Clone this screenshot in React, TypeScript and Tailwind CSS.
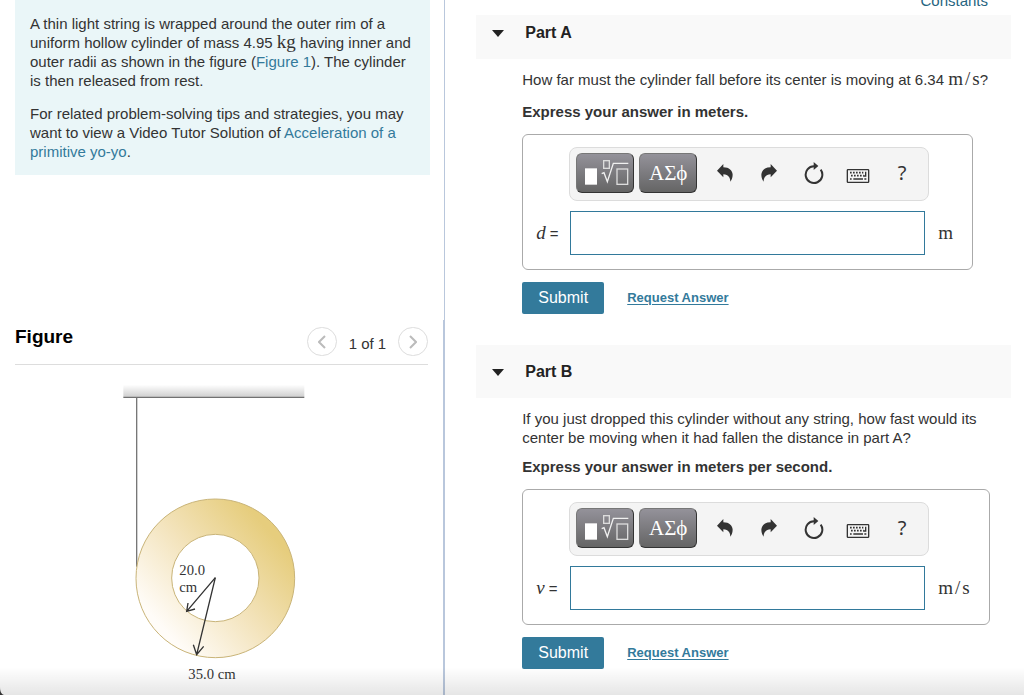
import type { ReactNode } from 'react'

const MATH = "font-['Liberation_Serif',serif]"

function Unit({ top, bottom }: { top: string; bottom?: string }) {
  return (
    <span className={`${MATH} text-[19px] leading-4`}>
      {top}
      {bottom && (
        <>
          <span className="px-0.5">/</span>
          {bottom}
        </>
      )}
    </span>
  )
}

function TemplateIcon() {
  return (
    <svg viewBox="3 3 168 114" className="w-full h-full" fill="none" aria-hidden="true">
      <rect x="27" y="46" width="36" height="49" fill="#fff" />
      <rect x="83" y="23" width="17" height="23" stroke="#dcdcdc" strokeWidth="4" />
      <path d="M77 62l7-3 10 27 18-55h45" stroke="#f0f0f0" strokeWidth="4" />
      <rect x="123" y="48" width="32" height="46" stroke="#dcdcdc" strokeWidth="4" />
    </svg>
  )
}

const ICONS: { label: string; viewBox: string; art: ReactNode }[] = [
  {
    label: 'Undo',
    viewBox: '39 33 72 72',
    art: <path d="M51 62L70 42V52C88 52 97 62 98 74C98 84 94 91 91 95C91 84 86 74 70 73V82Z" />,
  },
  {
    label: 'Redo',
    viewBox: '172 33 72 72',
    art: <path d="M232 62L213 42V52C195 52 186 62 185 74C185 84 189 91 192 95C192 84 197 74 213 73V82Z" />,
  },
  {
    label: 'Reset',
    viewBox: '305 33 72 72',
    art: (
      <>
        <path d="M341 49A25 25 0 1 0 361 59" fill="none" stroke="#333" strokeWidth="6" />
        <path d="M340 36L354 48L340 60Z" />
      </>
    ),
  },
  {
    label: 'Keyboard shortcuts',
    viewBox: '438 33 72 72',
    art: (
      <g fill="none" stroke="#333">
        <rect x="442" y="59" width="64" height="38" rx="2" strokeWidth="4" />
        <path d="M450 68h40M453 77h38" strokeWidth="5" strokeDasharray="5 4" />
        <path d="M450 87h5M460 87h29M493 87h6" strokeWidth="5" />
        <path d="M497 65v13h-7" strokeWidth="4" />
      </g>
    ),
  },
]

const DARK_BUTTON =
  'w-[58px] h-10 rounded-md border border-[#777] border-r-[#333] border-b-[#333] bg-gradient-to-b from-[#94929a] to-[#656565] text-white'

function Toolbar() {
  return (
    <div className="flex items-center w-[360px] h-[54px] pl-1.5 pr-1 pb-0.5 rounded-lg border border-[#dcdcdc] bg-[#f4f4f4] text-[#333]">
      <button type="button" aria-label="Templates" className={`${DARK_BUTTON} mr-[5px]`}>
        <TemplateIcon />
      </button>
      <button type="button" aria-label="Greek symbols" className={`${DARK_BUTTON} ${MATH} mr-1.5 text-[21px] leading-none`}>
        ΑΣϕ
      </button>
      <div className="grid grid-cols-5 items-center flex-1">
        {ICONS.map((icon) => (
          <button key={icon.label} type="button" aria-label={icon.label} className="flex justify-center">
            <svg viewBox={icon.viewBox} className="size-6" fill="#333" aria-hidden="true">
              {icon.art}
            </svg>
          </button>
        ))}
        <button type="button" aria-label="Help" className="font-['Noto_Sans',sans-serif] text-xl leading-6">
          ?
        </button>
      </div>
    </div>
  )
}

type AnswerProps = { id: string; symbol: string; unit: ReactNode }

function AnswerBox({ id, symbol, unit }: AnswerProps) {
  return (
    <form className="w-fit" onSubmit={(e) => e.preventDefault()}>
      <div className="grid grid-cols-[46px_auto] w-fit gap-y-2.5 pt-3 pr-[19px] pb-3.5 rounded-md border border-[#aaa]">
        <div className="col-start-2">
          <Toolbar />
        </div>
        <label htmlFor={id} className="self-center pl-[13px] whitespace-nowrap text-[15px]">
          <span className={`${MATH} italic text-[19px] leading-4`}>{symbol}</span> =
        </label>
        <div className="flex items-center">
          <input
            id={id}
            type="text"
            className="w-[355px] h-11 ml-px px-2 border border-[#32799b] bg-white outline-none"
          />
          <span className="ml-[13px]">{unit}</span>
        </div>
      </div>
      <div className="flex items-center gap-[23px] mt-3">
        <button type="submit" className="w-[82px] h-8 rounded-xs bg-[#337a9b] text-base text-white">
          Submit
        </button>
        <a href="#request" className="pb-0.5 text-[13px] font-bold text-[#337a9b] underline underline-offset-2">
          Request Answer
        </a>
      </div>
    </form>
  )
}

function PartHeader({ title, className }: { title: string; className: string }) {
  return (
    <h2 className={`flex items-center pl-4 pb-4 bg-[#f9f9f9] text-base leading-5 font-bold text-[#222] ${className}`}>
      <button type="button" className="flex items-center gap-[21px]">
        <svg viewBox="0 0 12 7" className="w-3 h-[7px]" fill="#222" aria-hidden="true">
          <path d="M0 0h12L6 7z" />
        </svg>
        {title}
      </button>
    </h2>
  )
}

function CylinderFigure() {
  return (
    <svg
      viewBox="20 0 690 945"
      className="block w-[230px] mx-auto mt-[15px] font-['Liberation_Serif',serif]"
      role="img"
      aria-label="Hollow cylinder hanging from a string"
    >
      <defs>
        <linearGradient id="ceiling" x1="0" y1="0" x2="0" y2="1">
          <stop offset="0" stopColor="#fff" />
          <stop offset="1" stopColor="#cfcfcf" />
        </linearGradient>
        <linearGradient id="brass" x1="0.2" y1="0.85" x2="0.88" y2="0.25">
          <stop offset="0" stopColor="#fffcf8" />
          <stop offset="0.5" stopColor="#f3e3bb" />
          <stop offset="1" stopColor="#e6cd7d" />
        </linearGradient>
      </defs>
      <rect x="69" y="14" width="543" height="37" fill="url(#ceiling)" />
      <path d="M69 52H612" stroke="#555" strokeWidth="3" />
      <path d="M109 52V560" stroke="#777" strokeWidth="4" />
      <circle cx="345" cy="595" r="238" fill="url(#brass)" stroke="#c9b478" strokeWidth="3" />
      <circle cx="345" cy="594" r="131" fill="#fff" stroke="#c9b478" strokeWidth="3" />
      <g fill="none" stroke="#333" strokeWidth="4">
        <path d="M345 593L259 694M263 669L259 694L284 687" />
        <path d="M345 593L289 824M279 794L289 824L310 799" />
      </g>
      <g fill="#333" fontSize="44">
        <text x="237" y="585">20.0</text>
        <text x="237" y="637">cm</text>
        <text x="264" y="898">35.0 cm</text>
      </g>
    </svg>
  )
}

function PagerButton({ label, d }: { label: string; d: string }) {
  return (
    <button
      type="button"
      aria-label={label}
      className="flex items-center justify-center w-[30px] h-[29px] rounded-full border border-[#ddd] bg-white"
    >
      <svg viewBox="0 0 8 14" className="w-2 h-3.5" fill="none" stroke="#bbb" strokeWidth="2" aria-hidden="true">
        <path d={d} />
      </svg>
    </button>
  )
}

export default function App() {
  return (
    <div className="relative grid grid-cols-[10fr_13fr] min-h-screen overflow-hidden bg-white font-['Liberation_Sans',Arial,sans-serif] text-[15px] leading-[19px] text-[#333]">
      <div className="flex flex-col min-w-0">
        <section className="h-80 pl-[15px] pr-3.5 border-r border-[#b9c7dc]">
          <div className="flex flex-col gap-3.5 px-[15px] pt-3.5 pb-3.5 bg-[#eaf6f8]">
            <p>
              A thin light string is wrapped around the outer rim of a uniform hollow cylinder of mass 4.95{' '}
              <Unit top="kg" /> having inner and outer radii as shown in the figure (
              <a href="#figure" className="text-[#337a9b]">Figure 1</a>). The cylinder is then released from rest.
            </p>
            <p>
              For related problem-solving tips and strategies, you may want to view a Video Tutor Solution of{' '}
              <a href="#video" className="text-[#337a9b]">Acceleration of a primitive yo-yo</a>.
            </p>
          </div>
        </section>

        <section id="figure" className="flex-1 pl-[15px] pr-[15px] border-r-2 border-[#b9c7dc]">
          <div className="flex items-start justify-between h-[45px] pt-[7px] border-b border-[#ddd]">
            <h2 className="text-[19px] leading-5 font-bold text-black">Figure</h2>
            <div className="flex items-center gap-3">
              <PagerButton label="Previous figure" d="M7 1L1 7l6 6" />
              <span className="pt-1">1 of 1</span>
              <PagerButton label="Next figure" d="M1 1l6 6-6 6" />
            </div>
          </div>
          <CylinderFigure />
        </section>
      </div>

      <main className="min-w-0 pl-[31px] pr-[13px]">
        <div className="flex items-end justify-end h-[15px] pr-[23px] pb-[5px]">
          <a href="#constants" className="text-[#26647f]">Constants</a>
        </div>

        <section>
          <PartHeader title="Part A" className="pt-2" />
          <div className="pl-[46px] pt-[11px]">
            <p className="mb-[13px]">
              How far must the cylinder fall before its center is moving at 6.34 <Unit top="m" bottom="s" />?
            </p>
            <p className="mb-[13px] font-bold">Express your answer in meters.</p>
            <AnswerBox id="distance" symbol="d" unit={<Unit top="m" />} />
          </div>
        </section>

        <section className="mt-[31px]">
          <PartHeader title="Part B" className="pt-[17px]" />
          <div className="pl-[46px] pt-[11px]">
            <p className="mb-2.5">
              If you just dropped this cylinder without any string, how fast would its center be moving when it had
              fallen the distance in part A?
            </p>
            <p className="mb-[13px] font-bold">Express your answer in meters per second.</p>
            <AnswerBox id="speed" symbol="v" unit={<Unit top="m" bottom="s" />} />
          </div>
        </section>
      </main>

      {/* Fade along the bottom edge */}
      <div
        aria-hidden
        className="pointer-events-none absolute inset-x-0 bottom-0 h-7 bg-gradient-to-b from-transparent to-black/10"
      />
      <svg viewBox="0 0 4 8" className="absolute left-0 bottom-0 w-1 h-2" fill="#333" aria-hidden="true">
        <path d="M0 0C0 4 1 7 4 8H0z" />
      </svg>
    </div>
  )
}
